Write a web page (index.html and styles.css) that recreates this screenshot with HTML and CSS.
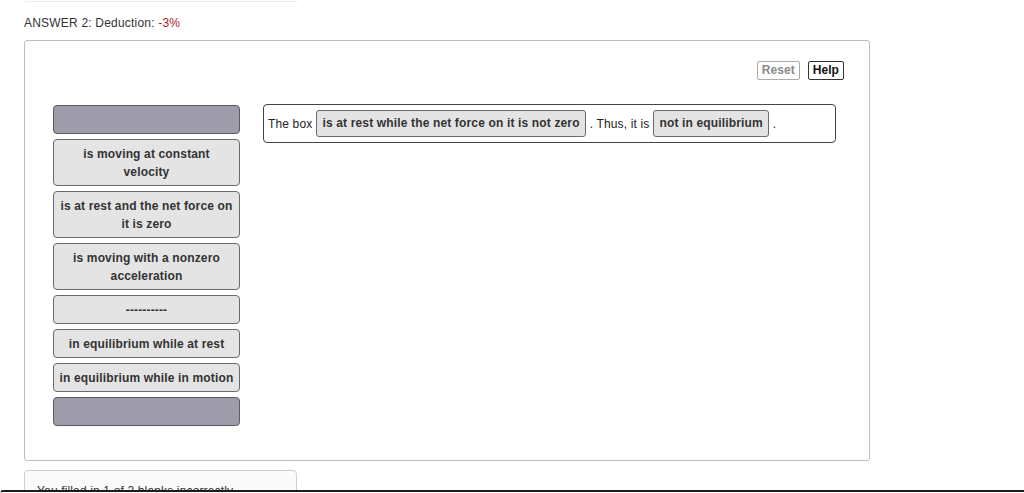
FILE: index.html
```html
<!DOCTYPE html>
<html>
<head>
<meta charset="utf-8">
<link rel="stylesheet" href="styles.css">
</head>
<body>
<div class="prev-box"></div>
<div class="answer-head">ANSWER 2: Deduction: <span class="deduct">-3%</span></div>
<div class="panel">
  <div class="toolbar">
    <span class="btn btn-reset">Reset</span>
    <span class="btn btn-help">Help</span>
  </div>
  <div class="work">
    <div class="bank">
      <div class="chip chip-empty"></div>
      <div class="chip">is moving at constant velocity</div>
      <div class="chip">is at rest and the net force on it is zero</div>
      <div class="chip">is moving with a nonzero acceleration</div>
      <div class="chip">----------</div>
      <div class="chip">in equilibrium while at rest</div>
      <div class="chip">in equilibrium while in motion</div>
      <div class="chip chip-empty"></div>
    </div>
    <div class="sentence">
      <span class="txt">The box</span>
      <span class="blank">is at rest while the net force on it is not zero</span>
      <span class="txt">. Thus, it is</span>
      <span class="blank">not in equilibrium</span>
      <span class="txt">.</span>
    </div>
  </div>
</div>
<div class="bottom-row">
  <div class="feedback">You filled in 1 of 2 blanks incorrectly.</div>
  <div class="cut-note">Not all incorrect blanks are shown</div>
</div>
<div class="window-edge"></div>
</body>
</html>
```
FILE: styles.css
```css
html, body {
  margin: 0;
  padding: 0;
  background: #ffffff;
  height: 493px;
  overflow: hidden;
}
body {
  font-family: "Liberation Sans", Arial, Helvetica, sans-serif;
  color: #333333;
  font-size: 12px;
}
.prev-box {
  margin-left: 25px;
  width: 270px;
  height: 1px;
  border: 1px solid #ececec;
  border-top: none;
  border-radius: 0 0 5px 5px;
}
.answer-head {
  margin: 14px 0 0 24px;
  height: 24px;
  line-height: 14px;
  font-size: 12px;
  letter-spacing: 0.2px;
  color: #333;
}
.deduct {
  color: #b3201c;
}
.panel {
  margin-left: 24px;
  width: 844px;
  height: 419px;
  border: 1px solid #bdbdbd;
  border-radius: 3px;
  display: flex;
  flex-direction: column;
}
.toolbar {
  display: flex;
  justify-content: flex-end;
  gap: 8px;
  padding: 20px 25px 0 0;
  height: 19px;
}
.btn {
  display: inline-block;
  box-sizing: border-box;
  height: 19px;
  line-height: 17px;
  padding: 0 4px;
  font-weight: bold;
  font-size: 12px;
  letter-spacing: 0.05px;
  border-radius: 2px;
  background: #fff;
}
.btn-reset {
  color: #8a8a8a;
  border: 1px solid #aaaaaa;
}
.btn-help {
  color: #111;
  border: 1px solid #333;
}
.work {
  display: flex;
  align-items: flex-start;
  padding: 25px 0 0 28px;
  gap: 23px;
}
.bank {
  width: 187px;
  display: flex;
  flex-direction: column;
  gap: 5px;
}
.chip {
  box-sizing: border-box;
  min-height: 29px;
  padding: 4.5px 5px;
  line-height: 18px;
  background: #e4e4e4;
  border: 1px solid #6a6a6a;
  border-radius: 4px;
  text-align: center;
  font-weight: bold;
  font-size: 12px;
  letter-spacing: 0.15px;
  color: #333;
}
.chip-empty {
  background: #9e9cab;
  border-color: #5b5b60;
}
.sentence {
  box-sizing: border-box;
  width: 573px;
  height: 39px;
  margin-top: -1px;
  border: 1px solid #444;
  border-radius: 4px;
  display: flex;
  align-items: center;
  padding: 0 4px;
  gap: 4px;
  font-size: 12px;
  letter-spacing: 0.15px;
  color: #222;
}
.blank {
  box-sizing: border-box;
  height: 27px;
  line-height: 25px;
  padding: 0 5px;
  background: #e4e4e4;
  border: 1px solid #6a6a6a;
  border-radius: 3px;
  font-weight: bold;
  color: #333;
}
.bottom-row {
  display: flex;
  align-items: flex-start;
  margin: 9px 0 0 24px;
}
.feedback {
  box-sizing: border-box;
  width: 273px;
  height: 40px;
  border: 1px solid #cfcfcf;
  border-radius: 4px;
  background: #fafafa;
  padding: 13px 0 0 12px;
  font-size: 12px;
  line-height: 14px;
  letter-spacing: 0.15px;
  color: #333;
}
.cut-note {
  margin: 19px 0 0 351px;
  font-size: 12px;
  line-height: 14px;
  color: #555;
}
.window-edge {
  position: fixed;
  left: 0;
  right: 0;
  bottom: 0;
  height: 1px;
  background: #ffffff;
  border-top: 2px solid #1c1c1c;
  border-left: 1px solid #bbbbbb;
  border-top-left-radius: 9px;
}
```
